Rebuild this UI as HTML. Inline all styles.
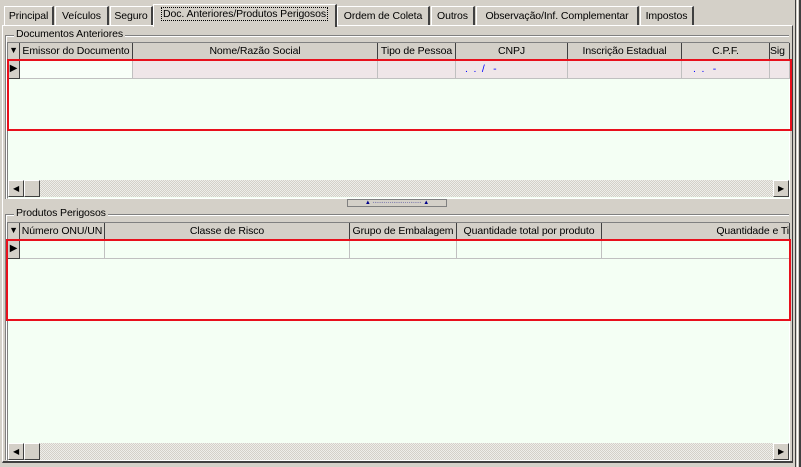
<!DOCTYPE html>
<html><head><meta charset="utf-8"><style>
*{margin:0;padding:0;box-sizing:border-box}
body{width:801px;height:467px;background:#d4d0c8;position:relative;overflow:hidden;font-family:"Liberation Sans",sans-serif;font-size:10.5px;letter-spacing:-0.1px;color:#000}
.a{position:absolute}
.tab{position:absolute;top:6px;height:20px;border-top:1px solid #fff;border-left:1px solid #fff;border-right:2px solid #404040;padding:3px 0 0 0;text-align:center;white-space:nowrap;background:#d4d0c8}
.grid{position:absolute;background:#f4fff4;border:1px solid #808080;border-right-color:#fff;border-bottom-color:#fff}
.hd{position:absolute;top:0;height:17px;background:#d4d0c8;border-right:1px solid #404040;border-bottom:1px solid #808080;text-align:center;line-height:16px;white-space:nowrap;overflow:hidden}
.cell{position:absolute;height:19px;border-right:1px solid #c0c0c0;border-bottom:1px solid #c0c0c0}
.ind{position:absolute;left:0;width:12px;background:#d4d0c8;border-right:1px solid #404040;border-bottom:1px solid #404040}
.sb{position:absolute;height:17px;background:repeating-conic-gradient(#d4d0c8 0 25%,#eeeeea 0 50%) 0 0/2px 2px}
.btn{position:absolute;top:0;width:16px;height:17px;background:#d4d0c8;border:1px solid #fff;border-right-color:#404040;border-bottom-color:#404040}
.red{position:absolute;border:2px solid #e8101c}
.gl{position:absolute;white-space:nowrap;background:#d4d0c8;padding:0 2px;color:#000}
</style></head><body>
<div class="tab" style="left:4px;width:50px">Principal</div>
<div class="tab" style="left:55px;width:54px">Veículos</div>
<div class="tab" style="left:110px;width:43px">Seguro</div>
<div class="tab" style="left:337px;width:93px">Ordem de Coleta</div>
<div class="tab" style="left:431px;width:44px">Outros</div>
<div class="tab" style="left:476px;width:163px">Observação/Inf. Complementar</div>
<div class="tab" style="left:640px;width:54px">Impostos</div>
<div class="a" style="left:2px;top:25px;width:791px;height:438px;border:1px solid #fff;border-right:1px solid #404040;border-bottom:2px solid #404040"></div>
<div class="tab" style="left:153px;top:4px;height:23px;width:184px;border-bottom:none;padding:3px 0 0 0"><span style="border:1px dotted #000;padding:0 1px">Doc. Anteriores/Produtos Perigosos</span></div>
<div class="a" style="left:795px;top:0;width:1px;height:467px;background:#404040"></div>
<div class="a" style="left:797px;top:0;width:1px;height:467px;background:#fff"></div>
<div class="a" style="left:799px;top:0;width:2px;height:467px;background:#404040"></div>

<div class="a" style="left:5px;top:35px;width:784px;height:164px;border-top:1px solid #808080;border-left:1px solid #808080;box-shadow:inset 1px 1px 0 #fff"></div>
<div class="gl" style="left:14px;top:28px">Documentos Anteriores</div>
<div class="grid" style="left:7px;top:42px;width:783px;height:157px">
 <div class="ind" style="top:0;height:17px;font-size:9px;line-height:15px;text-align:center">▼</div>
 <div class="hd" style="left:12px;width:113px">Emissor do Documento</div>
 <div class="hd" style="left:125px;width:245px">Nome/Razão Social</div>
 <div class="hd" style="left:370px;width:78px">Tipo de Pessoa</div>
 <div class="hd" style="left:448px;width:112px">CNPJ</div>
 <div class="hd" style="left:560px;width:114px">Inscrição Estadual</div>
 <div class="hd" style="left:674px;width:88px">C.P.F.</div>
 <div class="hd" style="left:762px;width:20px;text-align:left">Sig</div>
 <div class="ind" style="top:17px;height:19px;font-size:10px;line-height:18px;text-align:center">▶</div>
 <div class="cell" style="left:12px;top:17px;width:113px;background:#f8fff8"></div>
 <div class="cell" style="left:125px;top:17px;width:245px;background:#efe6e8"></div>
 <div class="cell" style="left:370px;top:17px;width:78px;background:#efe6e8"></div>
 <div class="cell" style="left:448px;top:17px;width:112px;background:#efe6e8;color:#0000ff;padding-left:9px;line-height:18px">.&nbsp;&nbsp;.&nbsp;&nbsp;/&nbsp;&nbsp;&nbsp;-</div>
 <div class="cell" style="left:560px;top:17px;width:114px;background:#efe6e8"></div>
 <div class="cell" style="left:674px;top:17px;width:88px;background:#efe6e8;color:#0000ff;padding-left:11px;line-height:18px">.&nbsp;&nbsp;.&nbsp;&nbsp;&nbsp;-</div>
 <div class="cell" style="left:762px;top:17px;width:20px;background:#efe6e8"></div>
 <div class="sb" style="left:0;top:137px;width:781px">
  <div class="btn" style="left:0;font-size:8px;line-height:15px;text-align:center">◀</div>
  <div class="btn" style="left:16px"></div>
  <div class="btn" style="left:765px;font-size:8px;line-height:15px;text-align:center">▶</div>
 </div>
</div>
<div class="red" style="left:7px;top:59px;width:785px;height:72px"></div>

<div class="a" style="left:347px;top:199px;width:100px;height:8px;border:1px solid #808080;background:#d4d0c8;color:#00008b;font-size:6px;line-height:6px;text-align:center;overflow:hidden;white-space:nowrap">▲ ·························· ▲</div>

<div class="a" style="left:5px;top:214px;width:784px;height:246px;border-top:1px solid #808080;border-left:1px solid #808080;box-shadow:inset 1px 1px 0 #fff"></div>
<div class="gl" style="left:14px;top:207px">Produtos Perigosos</div>
<div class="grid" style="left:7px;top:222px;width:783px;height:239px">
 <div class="ind" style="top:0;height:17px;font-size:9px;line-height:15px;text-align:center">▼</div>
 <div class="hd" style="left:12px;width:85px">Número ONU/UN</div>
 <div class="hd" style="left:97px;width:245px">Classe de Risco</div>
 <div class="hd" style="left:342px;width:107px">Grupo de Embalagem</div>
 <div class="hd" style="left:449px;width:145px">Quantidade total por produto</div>
 <div class="hd" style="left:594px;width:188px;text-align:right">Quantidade e Ti</div>
 <div class="ind" style="top:17px;height:19px;font-size:10px;line-height:18px;text-align:center">▶</div>
 <div class="cell" style="left:12px;top:17px;width:85px"></div>
 <div class="cell" style="left:97px;top:17px;width:245px"></div>
 <div class="cell" style="left:342px;top:17px;width:107px"></div>
 <div class="cell" style="left:449px;top:17px;width:145px"></div>
 <div class="cell" style="left:594px;top:17px;width:188px"></div>
 <div class="sb" style="left:0;top:220px;width:781px">
  <div class="btn" style="left:0;font-size:8px;line-height:15px;text-align:center">◀</div>
  <div class="btn" style="left:16px"></div>
  <div class="btn" style="left:765px;font-size:8px;line-height:15px;text-align:center">▶</div>
 </div>
</div>
<div class="red" style="left:6px;top:239px;width:785px;height:82px"></div>
</body></html>
